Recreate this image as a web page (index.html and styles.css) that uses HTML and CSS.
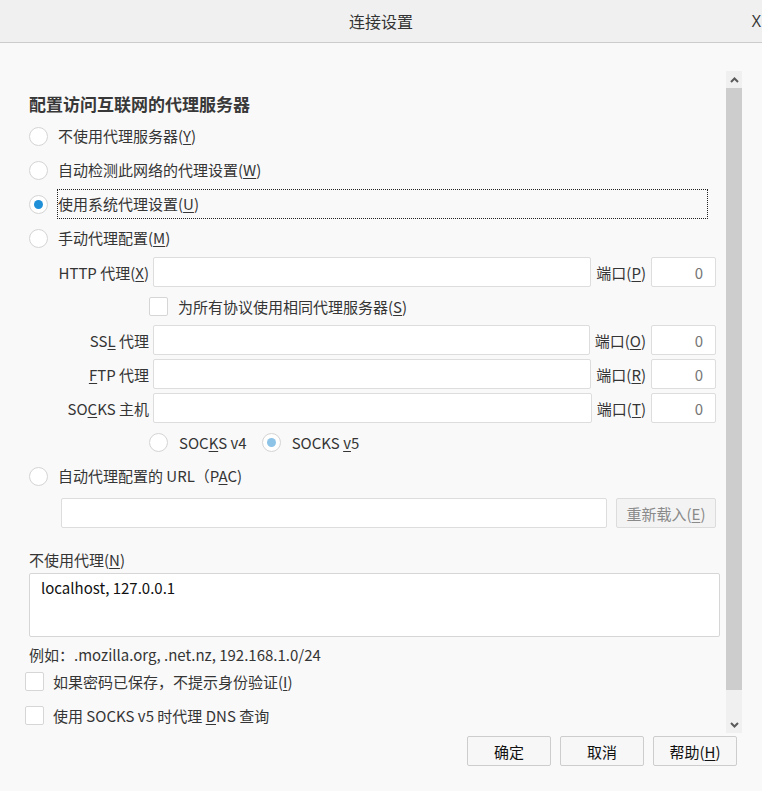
FILE: index.html
```html
<!DOCTYPE html>
<html lang="zh-CN">
<head>
<meta charset="utf-8">
<title>连接设置</title>
<link rel="stylesheet" href="styles.css">
</head>
<body>
<div class="window">
  <div class="titlebar">
    <span></span>
    <span class="title">连接设置</span>
    <span class="close">X</span>
  </div>
  <div class="main">
    <div class="content">
      <h1 class="heading">配置访问互联网的代理服务器</h1>
      <div class="rows">
        <div class="opt"><span class="radio"></span><span class="olabel">不使用代理服务器(<u>Y</u>)</span></div>
        <div class="opt"><span class="radio"></span><span class="olabel">自动检测此网络的代理设置(<u>W</u>)</span></div>
        <div class="opt"><span class="radio on"></span><span class="olabel focus">使用系统代理设置(<u>U</u>)</span></div>
        <div class="opt"><span class="radio"></span><span class="olabel">手动代理配置(<u>M</u>)</span></div>

        <div class="prow"><span class="plabel">HTTP 代理(<u>X</u>)</span><input class="host" type="text"><span class="portlabel">端口(<u>P</u>)</span><input class="port" type="text" value="0"></div>
        <div class="crow indent"><span class="check"></span><span class="clabel">为所有协议使用相同代理服务器(<u>S</u>)</span></div>
        <div class="prow"><span class="plabel">SS<u>L</u> 代理</span><input class="host" type="text"><span class="portlabel">端口(<u>O</u>)</span><input class="port" type="text" value="0"></div>
        <div class="prow"><span class="plabel"><u>F</u>TP 代理</span><input class="host" type="text"><span class="portlabel">端口(<u>R</u>)</span><input class="port" type="text" value="0"></div>
        <div class="prow"><span class="plabel">SO<u>C</u>KS 主机</span><input class="host" type="text"><span class="portlabel">端口(<u>T</u>)</span><input class="port" type="text" value="0"></div>
        <div class="vrow">
          <span class="radio"></span><span class="vlabel">SOC<u>K</u>S v4</span>
          <span class="radio on dim v5"></span><span class="vlabel">SOCKS <u>v</u>5</span>
        </div>
        <div class="opt"><span class="radio"></span><span class="olabel">自动代理配置的 URL（P<u>A</u>C)</span></div>
      </div>
      <div class="pacrow"><input class="pac" type="text"><span class="reload">重新载入(<u>E</u>)</span></div>
      <div class="noproxy">不使用代理(<u>N</u>)</div>
      <textarea class="noproxy-box">localhost, 127.0.0.1</textarea>
      <div class="example">例如：.mozilla.org, .net.nz, 192.168.1.0/24</div>
      <div class="checks">
        <div class="crow"><span class="check"></span><span class="clabel2">如果密码已保存，不提示身份验证(<u>I</u>)</span></div>
        <div class="crow"><span class="check"></span><span class="clabel2">使用 SOCKS v5 时代理 <u>D</u>NS 查询</span></div>
      </div>
    </div>
    <div class="scrollbar">
      <div class="sb-btn"><svg width="9" height="6" viewBox="0 0 9 6"><polyline points="1,5 4.5,1.5 8,5" fill="none" stroke="#5a5a5a" stroke-width="2"/></svg></div>
      <div class="sb-thumb"></div>
      <div class="sb-track"></div>
      <div class="sb-btn"><svg width="9" height="6" viewBox="0 0 9 6"><polyline points="1,1 4.5,4.5 8,1" fill="none" stroke="#5a5a5a" stroke-width="2"/></svg></div>
    </div>
  </div>
  <div class="footer">
    <button class="btn">确定</button>
    <button class="btn">取消</button>
    <button class="btn">帮助(<u>H</u>)</button>
  </div>
</div>
</body>
</html>
```
FILE: styles.css
```css
html, body {
  margin: 0;
  padding: 0;
  background: #f9f9f9;
}
body {
  font-family: "Noto Sans CJK SC", "Open Sans", sans-serif;
  font-size: 15px;
  color: #353535;
}
.window {
  width: 762px;
  height: 791px;
  overflow: hidden;
  display: flex;
  flex-direction: column;
}
.titlebar {
  height: 42px;
  flex: none;
  background: #f0f0f0;
  border-bottom: 1px solid #cccccc;
  display: grid;
  grid-template-columns: 1fr auto 1fr;
  align-items: center;
  overflow: hidden;
}
.title {
  font-size: 16px;
  color: #333;
  line-height: 22px;
}
.close {
  justify-self: end;
  margin-right: 1px;
  font-family: "Open Sans", sans-serif;
  font-size: 16px;
  color: #333;
}
.main {
  height: 690px;
  flex: none;
  display: flex;
}
.content {
  width: 726px;
  box-sizing: border-box;
  padding: 49px 6px 0 29px;
  flex: none;
}
.heading {
  margin: 0 0 5px 0;
  font-size: 17px;
  line-height: 24px;
  font-weight: bold;
  color: #383838;
}
.rows {
  display: flex;
  flex-direction: column;
  gap: 4px;
}
.opt {
  display: flex;
  align-items: center;
  height: 30px;
  gap: 9px;
}
.radio {
  width: 19px;
  height: 19px;
  box-sizing: border-box;
  border: 1px solid #d4d4d4;
  border-radius: 50%;
  background: #fff;
  flex: none;
  display: flex;
  align-items: center;
  justify-content: center;
}
.radio.on::after {
  content: "";
  width: 9px;
  height: 9px;
  border-radius: 50%;
  background: #1f8fd8;
}
.radio.on.dim::after {
  background: #8cc3e6;
}
.olabel {
  height: 30px;
  box-sizing: border-box;
  border: 1px solid transparent;
  line-height: 28px;
}
.olabel.focus {
  flex: 1;
  border: 1px dotted #222;
  margin-right: 12px;
}
u {
  text-underline-offset: 2px;
}
.prow {
  display: flex;
  align-items: center;
  height: 30px;
  margin-right: 4px;
}
.plabel {
  width: 120px;
  text-align: right;
  flex: none;
  white-space: nowrap;
}
input {
  font-family: "Noto Sans CJK SC", "Open Sans", sans-serif;
  font-size: 15px;
  height: 30px;
  box-sizing: border-box;
  border: 1px solid #dddddd;
  border-radius: 2px;
  background: #fff;
  margin: 0;
  outline: none;
}
.host {
  flex: 1;
  min-width: 0;
  margin-left: 4px;
}
.portlabel {
  margin: 0 5px 0 5px;
  white-space: nowrap;
}
.port {
  width: 65px;
  flex: none;
  text-align: right;
  padding-right: 12px;
  color: #777;
}
.crow {
  display: flex;
  align-items: center;
  height: 30px;
}
.crow.indent {
  padding-left: 120px;
}
.check {
  width: 19px;
  height: 19px;
  box-sizing: border-box;
  border: 1px solid #d6d6d6;
  border-radius: 2px;
  background: #fff;
  flex: none;
}
.clabel {
  margin-left: 10px;
}
.vrow {
  display: flex;
  align-items: center;
  height: 30px;
  padding-left: 120px;
}
.vlabel {
  margin-left: 11px;
}
.radio.v5 {
  margin-left: 15px;
}
.pacrow {
  display: flex;
  align-items: center;
  height: 30px;
  margin: 7px 4px 0 32px;
}
.pac {
  flex: 1;
  min-width: 0;
}
.reload {
  width: 100px;
  height: 30px;
  box-sizing: border-box;
  margin-left: 9px;
  border: 1px solid #dcdcdc;
  border-radius: 2px;
  background: #f3f3f3;
  color: #8a8a8a;
  display: flex;
  align-items: center;
  justify-content: center;
  flex: none;
}
.noproxy {
  margin-top: 20px;
  line-height: 24px;
}
.noproxy-box {
  display: block;
  width: 100%;
  height: 64px;
  box-sizing: border-box;
  margin: 1px 0 0 0;
  padding: 3px 11px;
  border: 1px solid #d6d6d6;
  border-radius: 2px;
  background: #fff;
  font-family: "Noto Sans CJK SC", "Open Sans", sans-serif;
  font-size: 15px;
  line-height: 22px;
  color: #111;
  resize: none;
  outline: none;
}
.example {
  margin-top: 7px;
  line-height: 22px;
}
.checks {
  margin: 0 0 0 -4px;
  display: flex;
  flex-direction: column;
  gap: 4px;
}
.clabel2 {
  margin-left: 9px;
}
.scrollbar {
  width: 16px;
  flex: none;
  margin-top: 28px;
  display: flex;
  flex-direction: column;
  background: #f0f0f0;
}
.sb-btn {
  height: 17px;
  flex: none;
  display: flex;
  align-items: center;
  justify-content: center;
}
.sb-thumb {
  height: 602px;
  flex: none;
  background: #cdcdcd;
}
.sb-track {
  flex: 1;
}
.footer {
  flex: 1;
  display: flex;
  justify-content: flex-end;
  align-items: flex-start;
  gap: 9px;
  padding: 3px 25px 0 0;
}
.btn {
  width: 84px;
  height: 30px;
  box-sizing: border-box;
  border: 1px solid #cdcdcd;
  border-radius: 2px;
  background: #f7f7f7;
  font-family: "Noto Sans CJK SC", "Open Sans", sans-serif;
  font-size: 15px;
  color: #111;
  padding: 0;
}
```
